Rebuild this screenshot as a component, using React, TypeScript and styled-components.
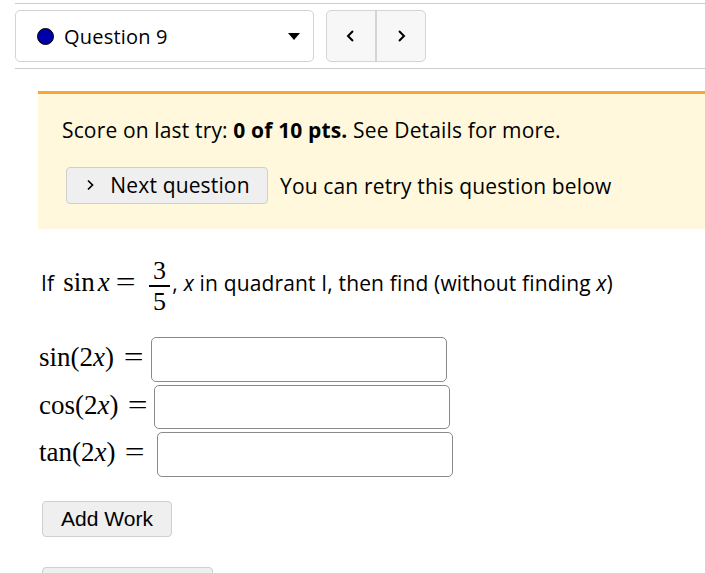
import React from "react";
import styled, { createGlobalStyle } from "styled-components";

const Global = createGlobalStyle`
  html, body { margin: 0; padding: 0; background: #fff; }
  body { font-family: "Open Sans", "Noto Sans", sans-serif; color: #000; overflow: hidden; }
`;

const Page = styled.div`
  width: 705px;
  height: 573px;
  overflow: hidden;
  padding-top: 3px;
  box-sizing: border-box;
`;

const Header = styled.div`
  margin-left: 15px;
  border-top: 1px solid #ccc;
  border-bottom: 1px solid #ccc;
  padding: 6px 0;
  display: flex;
  gap: 12px;
`;

const Select = styled.div`
  width: 299px;
  height: 52px;
  box-sizing: border-box;
  border: 1px solid #d4d4d4;
  border-radius: 5px;
  display: flex;
  align-items: center;
  padding: 0 13px 0 21px;
  font-family: "Open Sans", "Noto Sans", sans-serif;
  font-size: 20px;
`;

const Dot = styled.span`
  width: 17px;
  height: 17px;
  border-radius: 50%;
  background: #0000a8;
  border: 1.5px solid #000;
  box-sizing: border-box;
  margin-right: 10px;
  margin-top: 1px;
`;

const SelectLabel = styled.span`
  flex: 1;
  letter-spacing: 0.2px;
`;

const Caret = styled.span`
  width: 0;
  height: 0;
  border-left: 6px solid transparent;
  border-right: 6px solid transparent;
  border-top: 7px solid #000;
`;

const NavGroup = styled.div`
  display: flex;
  width: 100px;
  height: 52px;
  box-sizing: border-box;
  border: 1px solid #d4d4d4;
  border-radius: 5px;
  background: #f7f7f7;
  overflow: hidden;
`;

const NavButton = styled.div<{ $divider?: boolean }>`
  flex: 1;
  display: flex;
  align-items: center;
  justify-content: center;
  border-right: ${(p) => (p.$divider ? "2px solid #d4d4d4" : "none")};
`;

const Main = styled.div`
  margin-left: 38px;
  padding-top: 22px;
`;

const Notice = styled.div`
  background: #fff8dc;
  border-top: 3px solid #f9a634;
  padding: 24px 24px 24px;
  height: 138px;
  box-sizing: border-box;
  font-size: 21px;
  letter-spacing: 0.15px;
`;

const NoticeLine = styled.div`
  line-height: 24px;
`;

const NoticeRow = styled.div`
  display: flex;
  align-items: center;
  margin-top: 25px;
  gap: 12px;
`;

const GrayButton = styled.div<{ $width: number }>`
  width: ${(p) => p.$width}px;
  height: 37px;
  box-sizing: border-box;
  background: #efefef;
  border: 1px solid #cfcfcf;
  border-radius: 4px;
  display: flex;
  align-items: center;
  justify-content: center;
  gap: 14px;
`;

const NextButton = styled(GrayButton)`
  margin-left: 4px;
  font-size: 21px;
  padding-bottom: 1px;
`;

const Question = styled.div`
  margin-top: 25px;
  margin-left: 3px;
  font-size: 21px;
  letter-spacing: 0.15px;
  height: 66px;
  line-height: 56px;
  white-space: nowrap;
`;

const MathText = styled.span<{ $ml?: number }>`
  font-family: "Liberation Serif", "DejaVu Serif", serif;
  font-size: 27px;
  letter-spacing: 0;
  margin-left: ${(p) => p.$ml ?? 0}px;
`;

const MathVar = styled.i<{ $ml?: number }>`
  font-family: "Liberation Serif", "DejaVu Serif", serif;
  font-size: 27px;
  letter-spacing: 0;
  margin-left: ${(p) => p.$ml ?? 0}px;
`;

const Equals = styled.span<{ $ml: number; $mr: number }>`
  display: inline-block;
  font-family: "Liberation Serif", "DejaVu Serif", serif;
  font-size: 27px;
  transform: scaleX(1.3);
  margin: 0 ${(p) => p.$mr}px 0 ${(p) => p.$ml}px;
`;

const SansVar = styled.i`
  margin-left: 6px;
`;

const Frac = styled.span`
  display: inline-flex;
  flex-direction: column;
  align-items: center;
  vertical-align: middle;
  font-family: "Liberation Serif", "DejaVu Serif", serif;
  font-size: 26px;
  line-height: 22px;
  margin: 0 2px 0 10px;
  position: relative;
  top: 2px;
`;

const FracNum = styled.span`
  height: 21px;
  line-height: 18px;
`;

const FracDen = styled.span`
  height: 24px;
  line-height: 25px;
`;

const FracBar = styled.span`
  width: 21px;
  height: 1.5px;
  background: #000;
  margin: 2px 0 2px;
`;

const Rows = styled.div`
  margin-top: 17px;
  margin-left: 1px;
  display: flex;
  flex-direction: column;
  gap: 3px;
`;

const Row = styled.div`
  display: flex;
  align-items: center;
`;

const EqLabel = styled.span<{ $w: number }>`
  width: ${(p) => p.$w}px;
  white-space: nowrap;
  padding-bottom: 4px;
`;

const Input = styled.div<{ $h: number }>`
  width: 296px;
  height: ${(p) => p.$h}px;
  box-sizing: border-box;
  border: 1px solid #8a8a8a;
  border-radius: 5px;
  background: #fff;
`;

const WorkButton = styled(GrayButton)`
  margin-top: 24px;
  margin-left: 4px;
  height: 36px;
  font-family: "Liberation Sans", Arial, sans-serif;
  font-size: 21px;
`;

const CutButton = styled(GrayButton)`
  margin-top: 30px;
  margin-left: 4px;
`;

const Chevron = ({ dir, thin }: { dir: "l" | "r"; thin?: boolean }) => (
  <svg width="12" height="14" viewBox="0 0 12 14">
    <path
      d={dir === "l" ? "M8 2 L3 7 L8 12" : thin ? "M4 2.5 L8.5 7 L4 11.5" : "M4 2 L9 7 L4 12"}
      fill="none"
      stroke="#000"
      strokeWidth={thin ? 1.7 : 2}
    />
  </svg>
);

const rows = [
  { fn: "sin", w: 112, h: 45 },
  { fn: "cos", w: 115, h: 44 },
  { fn: "tan", w: 118, h: 45 },
];

export default function App() {
  return (
    <Page>
      <Global />
      <Header>
        <Select>
          <Dot />
          <SelectLabel>Question 9</SelectLabel>
          <Caret />
        </Select>
        <NavGroup>
          <NavButton $divider>
            <Chevron dir="l" />
          </NavButton>
          <NavButton>
            <Chevron dir="r" />
          </NavButton>
        </NavGroup>
      </Header>
      <Main>
        <Notice>
          <NoticeLine>
            Score on last try: <b>0 of 10 pts.</b> See Details for more.
          </NoticeLine>
          <NoticeRow>
            <NextButton $width={202}>
              <Chevron dir="r" thin />
              Next question
            </NextButton>
            <span>You can retry this question below</span>
          </NoticeRow>
        </Notice>
        <Question>
          If
          <MathText $ml={9}>sin</MathText>
          <MathVar $ml={3}>x</MathVar>
          <Equals $ml={8} $mr={6}>=</Equals>
          <Frac>
            <FracNum>3</FracNum>
            <FracBar />
            <FracDen>5</FracDen>
          </Frac>
          ,<SansVar>x</SansVar> in quadrant I, then find (without finding <i>x</i>)
        </Question>
        <Rows>
          {rows.map((r) => (
            <Row key={r.fn}>
              <EqLabel $w={r.w}>
                <MathText>
                  {r.fn}(2<MathVar>x</MathVar>)
                </MathText>
                <Equals $ml={12} $mr={0}>=</Equals>
              </EqLabel>
              <Input $h={r.h} />
            </Row>
          ))}
        </Rows>
        <WorkButton $width={130}>Add Work</WorkButton>
        <CutButton $width={171} />
      </Main>
    </Page>
  );
}
